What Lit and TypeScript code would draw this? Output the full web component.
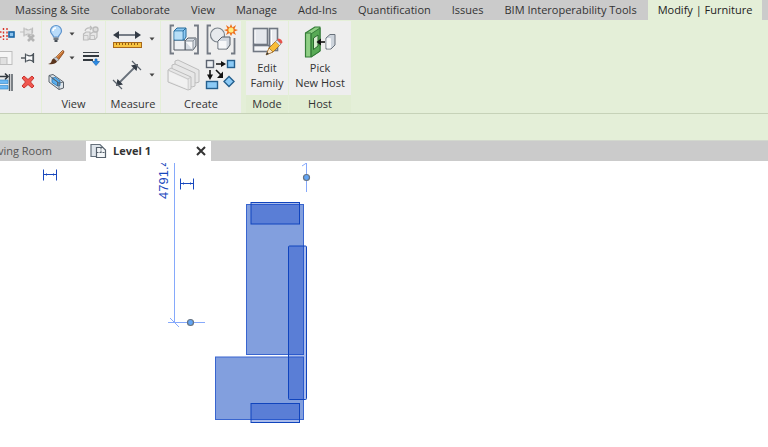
import { LitElement, html, svg, css, nothing, type SVGTemplateResult, type TemplateResult } from "lit";
import { customElement, property } from "lit/decorators.js";

interface Glyph {
  w: number;
  h: number;
  art: SVGTemplateResult;
}

const icons: Record<string, Glyph> = {
  splitGap: {
    w: 20, h: 20,
    art: svg`<path d="M9.500 4V16M13 4V16" stroke="#d8352c" stroke-width="1.400" stroke-dasharray="2 1.500"/>
      <path d="M2 8H8M2 13H8" fill="none" stroke="#d8352c" stroke-width="1.400" stroke-dasharray="2 1.500"/>
      <rect x="15" y="8" width="5" height="5" fill="#8cc4ef" stroke="#1764a4" stroke-width="1.600"/>`,
  },
  unpin: {
    w: 18, h: 18,
    art: svg`<path d="M1 7H5M5 2.500V11.500M5 4H7Q9 6 12 4H13V10H12Q9 8 7 10H5M13.500 2.500V8" fill="#e3e3e3" stroke="#bdbdbd" stroke-width="1.200"/>
      <path d="M9 10l6 6M15 10l-6 6" stroke="#b4b4b4" stroke-width="2.600"/>`,
  },
  scale: {
    w: 20, h: 20,
    art: svg`<rect x="1" y="3.500" width="17" height="13" fill="#f5f5f5" stroke="#bdbdbd"/>
      <rect x="6" y="9.500" width="7" height="7" fill="#e0e0e0" stroke="#bdbdbd"/>`,
  },
  pin: {
    w: 18, h: 18,
    art: svg`<path d="M2 9H6" stroke="#3e454b" stroke-width="1.300"/>
      <path d="M6.500 4.500V13.500M6.500 6H8Q11 8 14 5.500V12.500Q11 10 8 12H6.500Z" fill="#f9fafb" stroke="#4d555c" stroke-width="1.200"/>
      <path d="M14.500 4V14" stroke="#4d555c" stroke-width="1.200"/>`,
  },
  array: {
    w: 20, h: 20,
    art: svg`<path d="M3 4.500H14M11 1.500L14 4.500L11 7.500" fill="none" stroke="#333a41" stroke-width="1.600"/>
      <path d="M5 8H14V11.500H5ZM5 13.500H14V17H5Z" fill="#6db8f3" stroke="#2b83c8" stroke-width=".6"/>
      <path d="M15.500 2V19M18 2V19" stroke="#4b535a" stroke-width="1.400"/>`,
  },
  remove: {
    w: 18, h: 18,
    art: svg`<path d="M3 5L5 3L9 6.500L13 3L15 5L11.500 9L15 13L13 15L9 11.500L5 15L3 13L6.500 9Z" fill="#f0574f" stroke="#c9342f" stroke-linejoin="round"/>`,
  },
  bulb: {
    w: 18, h: 18,
    art: svg`<path d="M6.500 12C6.500 9.500 3.500 9 3.500 6A5.500 5.500 0 0 1 14.500 6C14.500 9 11.500 9.500 11.500 12Z" fill="#b9dcfa" stroke="#5c92cc" stroke-width="1.200"/>
      <path d="M6 6A3 3 0 0 1 9 3" fill="none" stroke="#fff" stroke-width="1.600"/>
      <path d="M6.500 12.500H11.500V15H6.500Z" fill="#6f7880"/><path d="M7.500 15H10.500V17H7.500Z" fill="#454d55"/>`,
  },
  displace: {
    w: 18, h: 18,
    art: svg`<path d="M1.500 9L4 7H8V13L6 15H1.500ZM8 9L11 7H15V12L13 14.500H8Z" fill="#e6e6e6" stroke="#bcbcbc" stroke-width="1.200"/>
      <path d="M3 6Q4 2 9 3M8 1L10 3L8 5" fill="none" stroke="#bcbcbc" stroke-width="1.200"/>
      <circle cx="13.500" cy="4.500" r="2.500" fill="#ddd" stroke="#bcbcbc" stroke-width="1.400"/>
      <path d="M1.500 10.500H6V15M8 10.500H12.500V14" fill="none" stroke="#c4c4c4"/>`,
  },
  brush: {
    w: 18, h: 18,
    art: svg`<path d="M8 9L15.500 1.500Q18 2 16.500 4L11 11.500Z" fill="#c4702f" stroke="#83421a" stroke-width=".8"/>
      <path d="M8.500 9L16 2" stroke="#edb57a" stroke-width=".8"/>
      <path d="M6.500 9.500L9 8L11.500 10.500L10 12.500Z" fill="#c9ced3" stroke="#737b82" stroke-width=".6"/>
      <path d="M7 9.500L10 12.500Q8 16 1 15Q4.500 14 4.500 12Q5 9.500 7 9.500Z" fill="#5b351d"/>`,
  },
  thinLines: {
    w: 18, h: 18,
    art: svg`<path d="M1 3.500H17" stroke="#3c4349"/><path d="M1 7H17" stroke="#33393f" stroke-width="2"/>
      <path d="M1 11H11" stroke="#33393f" stroke-width="2"/>
      <path d="M13 10H15V12.500H17.500L14 16.500L10.500 12.500H13Z" fill="#2c8ce6" stroke="#1766b1" stroke-width=".7"/>`,
  },
  selectionBox: {
    w: 18, h: 18,
    art: svg`<path d="M2 2.500L6 1.500L16.500 9V15L12 16.500L2 9Z" fill="#dfe5ea" stroke="#59626b"/>
      <path d="M5 5L8.500 4.500L13 8V12.500L10.500 13L5 9.500Z" fill="#58aeee" stroke="#1f6fae" stroke-width=".8"/>
      <path d="M2 2.500L12 10V16.500M12 10L16.500 9M5 5L10.500 9V13" fill="none" stroke="#59626b" stroke-width=".9"/>`,
  },
  measure: {
    w: 32, h: 32,
    art: svg`<path d="M5 12H27" stroke="#68707a" stroke-width="1.800"/><path d="M2 12L8 8V16ZM30 12L24 8V16Z" fill="#333b45"/>
      <rect x="2.500" y="19.500" width="28" height="5" fill="#f7c340" stroke="#a8681a"/>
      <path d="M5.500 20V22M8.500 20V22M11.500 20V22M14.500 20V22M17.500 20V22M20.500 20V22M23.500 20V22M26.500 20V22" stroke="#84500f" stroke-width=".9"/>`,
  },
  aligned: {
    w: 32, h: 32,
    art: svg`<path d="M7 25L25 7" stroke="#68707a" stroke-width="1.800"/>
      <path d="M5 27L6.500 20L12 25.500ZM27 5L20 6.500L25.500 12Z" fill="#333b45"/>
      <path d="M2 21L11 30M21 2L30 11" stroke="#5c646d" stroke-width="1.200"/>`,
  },
  createAssembly: {
    w: 32, h: 32,
    art: svg`<path d="M6 2.500H2.500V30.500H6M26 2.500H30V30.500H26" fill="none" stroke="#747a84" stroke-width="1.800"/>
      <path d="M17 18L20 15H28V23L25 27H17Z" fill="#d6dce3" stroke="#515962"/><path d="M17 18H25V27M25 18L28 15" fill="#f7f8fa" stroke="#8b939c"/>
      <path d="M6 17H17V27H6Z" fill="#eef0f3" stroke="#515962"/>
      <path d="M6 8L9 5H18V14L16 17H6Z" fill="#8cc9f3" stroke="#286c9c"/><path d="M6 8H15V17M15 8L18 5" fill="none" stroke="#286c9c"/><rect x="6.500" y="8.500" width="8" height="8" fill="#b7dff8"/>`,
  },
  createGroup: {
    w: 32, h: 32,
    art: svg`<path d="M6 2.500H2.500V30.500H6M26 30.500H29.500V15" fill="none" stroke="#747a84" stroke-width="1.800"/>
      <circle cx="12.500" cy="12" r="7" fill="#e7eaed" stroke="#7b838b" stroke-width="1.200"/>
      <path d="M13 18L17 14H25V22L22 26H13Z" fill="#d1d7df" stroke="#555d66"/><rect x="13.500" y="18" width="8" height="7.500" fill="#f6f7f9"/>
      <path d="M26 1L27.500 4.500L31 2L29.500 6L33 7L29.500 8.500L31 12L27.500 10L26 13L24.500 10L21 12L22.500 8.500L19 7L22.500 6L21 2L24.500 4.500Z" fill="#ed701c"/><circle cx="26" cy="7" r="2.600" fill="#ffec81"/>`,
  },
  createParts: {
    w: 34, h: 32,
    art: svg`<g fill="#e7e7e7" stroke="#bdbdbd" stroke-linejoin="round"><path d="M8 2L11 1L32 11V23L29 24L8 14Z"/>
      <path d="M5 6L8 5L28 14V27L25 28L5 18Z"/><path d="M1 11L4 9L24 18V30L21 31L1 23Z"/></g>
      <path d="M1 11L21 20V31M21 20L24 18" fill="none" stroke="#c6c6c6"/><path d="M2 12.500L20.500 21V30L2 22Z" fill="#f1f1f1"/>`,
  },
  createSimilar: {
    w: 32, h: 32,
    art: svg`<rect x="1.500" y="1.500" width="7" height="7" fill="#eef0f3" stroke="#5b6370" stroke-width="1.400"/>
      <rect x="22.500" y="1.500" width="7" height="7" fill="#8bcaf6" stroke="#245f8e" stroke-width="1.400"/>
      <rect x="1.500" y="22.500" width="11" height="7" fill="#8bcaf6" stroke="#245f8e" stroke-width="1.400"/>
      <path d="M24 17.500L29 22.500L24 27.500L19 22.500Z" fill="#8bcaf6" stroke="#245f8e" stroke-width="1.400"/>
      <path d="M11 5H17M5 11V17M11 11L16 16" stroke="#111" stroke-width="1.600"/><path d="M16 2L21 5L16 8ZM2 15.500H8L5 21ZM18 12.500V19H12Z" fill="#111"/>`,
  },
  editFamily: {
    w: 32, h: 32,
    art: svg`<rect x="2.500" y="2.500" width="14" height="16" fill="#e4e7ec" stroke="#707782" stroke-width="1.600"/>
      <rect x="18.500" y="2.500" width="8" height="22" fill="#e9ebef" stroke="#707782" stroke-width="1.600"/>
      <rect x="2.500" y="19.500" width="16" height="6" fill="#f4f5f7" stroke="#707782" stroke-width="1.600"/>
      <path d="M4 4V17M20.500 4V20" stroke="#fff"/>
      <path d="M16 28L18 22L26 14L30 18L22 26Z" fill="#f8bd39" stroke="#9b661d" stroke-width=".8"/>
      <path d="M26 14L27.500 12.500Q31 13 31.500 16.500L30 18Z" fill="#e6534b"/><path d="M24.500 15.500L26 14L30 18L28.500 19.500Z" fill="#dfe3e8" stroke="#7d858d" stroke-width=".5"/>
      <path d="M15 29L18 22L22 26Z" fill="#f9e5c8" stroke="#9b661d" stroke-width=".7"/><path d="M15 29L16 26L18 28Z" fill="#333"/>`,
  },
  pickHost: {
    w: 32, h: 32,
    art: svg`<path d="M1.500 7L11 1H16V25L7 31H1.500Z" fill="#8fcf85" stroke="#347d38" stroke-width="1.200" stroke-linejoin="round"/>
      <path d="M7 8L16 2V25L7 31Z" fill="#58aa55" stroke="#347d38"/><path d="M1.500 7H7V31" fill="none" stroke="#347d38"/>
      <path d="M9.500 12L14 9V20L9.500 23.500Z" fill="#d7edcf" stroke="#28682c"/>
      <path d="M16 16H21" stroke="#111" stroke-width="1.600"/><path d="M12.500 16L17 12.500V19.500Z" fill="#111"/>
      <path d="M22 12L26 8.500H31V19L27 23H22Z" fill="#cdd4dc" stroke="#68717b"/><rect x="22.500" y="12" width="4.500" height="10.500" rx="1" fill="#f4f5f7"/>`,
  },
  floorPlan: {
    w: 18, h: 16,
    art: svg`<path d="M1 1.500H10L12.500 4V13.500H1Z" fill="#dfe5eb" stroke="#66717c" stroke-width="1.200"/>
      <path d="M6.500 4.500H13L15.500 7V14.500H6.500Z" fill="#f3f6f8" stroke="#56616c" stroke-width="1.200"/>
      <path d="M6.500 9.500H15M11 4.500V9.500" stroke="#56616c" stroke-dasharray="2 1"/>`,
  },
  close: { w: 10, h: 10, art: svg`<path d="M1 1L9 9M9 1L1 9" stroke="#333" stroke-width="2"/>` },
  caret: { w: 6, h: 4, art: svg`<path d="M.5 .5H5.500L3 3.500Z" fill="#444"/>` },
};

const draw = (name: string) => {
  const g = icons[name];
  return html`<svg width=${g.w} height=${g.h} viewBox="0 0 ${g.w} ${g.h}" fill="none" aria-hidden="true">${g.art}</svg>`;
};

const tool = (name: string, label: string) =>
  html`<button class="tool" type="button" aria-label=${label}>${draw(name)}</button>`;

const menu = (label: string) =>
  html`<button class="tool" type="button" aria-label=${label}>${draw("caret")}</button>`;

@customElement("ribbon-panel")
export class RibbonPanel extends LitElement {
  @property() label = "";

  static styles = css`
    :host { display: flex; flex-direction: column; flex: none; }
    .body { flex: 1; background: #eeeeee; }
    .label {
      height: 18px;
      line-height: 18px;
      text-align: center;
      background: var(--label-bg, #eeeeee);
    }
  `;

  render() {
    return html`<div class="body"><slot></slot></div><div class="label">${this.label}</div>`;
  }
}

@customElement("ribbon-bar")
export class RibbonBar extends LitElement {
  static styles = css`
    :host { display: block; background: #e4efd8; padding-top: 1px; }
    .panels {
      display: flex;
      gap: 1px;
      height: 92px;
      margin-left: -8px;
      border-bottom: 1px solid #c6d2b8;
    }
    .shelf { height: 26px; }
    .grid { display: grid; place-items: stretch; height: 74px; }
    .modify { grid-template-columns: 24px 24px; grid-auto-rows: 24px; width: 49px; padding-top: 1px; height: 73px; }
    .view { grid-template-columns: 20px 12px 26px; grid-auto-rows: 24px; padding: 1px 1px 0 4px; height: 73px; }
    .measure { grid-template-columns: 42px 8px; grid-auto-rows: 36px; padding-right: 4px; }
    .create { grid-template-columns: 37px 37px; grid-auto-rows: 36px; padding: 0 2px 0 4px; }
    .context { --label-bg: #e1edd3; }
    .first { margin-left: 4px; }
    .tool, .big {
      display: flex;
      align-items: center;
      justify-content: center;
      padding: 0;
      border: 0;
      background: none;
      font: inherit;
      color: inherit;
    }
    .big { flex-direction: column; height: 74px; line-height: 15px; }
    .line { display: block; }
    .big svg { margin-bottom: 2px; }
    .mode { width: 42px; }
    .host { width: 62px; }
    svg { flex: none; overflow: visible; }
  `;

  render() {
    return html`
      <div class="panels">
        <ribbon-panel>
          <div class="grid modify">
            ${tool("splitGap", "Split with gap")}${tool("unpin", "Unpin")}
            ${tool("scale", "Scale")}${tool("pin", "Pin")}
            ${tool("array", "Array")}${tool("remove", "Delete")}
          </div>
        </ribbon-panel>
        <ribbon-panel label="View">
          <div class="grid view">
            ${tool("bulb", "Hide in view")}${menu("Hide options")}${tool("displace", "Displace elements")}
            ${tool("brush", "Override graphics")}${menu("Override options")}${tool("thinLines", "Linework")}
            ${tool("selectionBox", "Selection box")}
          </div>
        </ribbon-panel>
        <ribbon-panel label="Measure">
          <div class="grid measure">
            ${tool("measure", "Measure")}${menu("Measure options")}
            ${tool("aligned", "Aligned dimension")}${menu("Dimension options")}
          </div>
        </ribbon-panel>
        <ribbon-panel label="Create">
          <div class="grid create">
            ${tool("createAssembly", "Create assembly")}${tool("createGroup", "Create group")}
            ${tool("createParts", "Create parts")}${tool("createSimilar", "Create similar")}
          </div>
        </ribbon-panel>
        <ribbon-panel class="context first" label="Mode">
          <button class="big mode" type="button">
            ${draw("editFamily")}<span class="line">Edit</span><span class="line">Family</span>
          </button>
        </ribbon-panel>
        <ribbon-panel class="context" label="Host">
          <button class="big host" type="button">
            ${draw("pickHost")}<span class="line">Pick</span><span class="line">New Host</span>
          </button>
        </ribbon-panel>
      </div>
      <div class="shelf"></div>
    `;
  }
}

@customElement("plan-view")
export class PlanView extends LitElement {
  static styles = css`
    :host { display: block; background: #fff; padding-top: 2px; }
    svg { display: block; width: 100%; height: 100%; }
    .value { font: 13px "Liberation Sans", Arial, sans-serif; fill: #1848bd; }
    .base { fill: #829fde; stroke: #3865cf; }
    .over { fill: #1446c8; fill-opacity: 0.36; stroke: #1044bd; }
    .guide { stroke: #86a9fb; }
    .tick { stroke: #1848bd; }
    .grip { fill: #62a5f5; stroke: #667382; stroke-width: 1.2px; }
  `;

  private marker(x: number, y: number) {
    return svg`<path class="tick" d="M${x} ${y - 1}v11M${x + 13} ${y - 1}v11M${x} ${y + 4}h13M${x + 3} ${y + 3}v2M${x + 10} ${y + 3}v2"/>`;
  }

  render() {
    return html`<svg fill="none" role="img" aria-label="Level 1 floor plan">
      <rect class="base" x="246.500" y="41.500" width="57" height="150" />
      <rect class="base" x="215.500" y="194" width="88" height="62.500" />
      <rect class="over" x="251" y="39.500" width="48.500" height="21.500" />
      <rect class="over" x="288.500" y="83" width="18" height="153.500" rx="1" />
      <rect class="over" x="251" y="240.500" width="48.500" height="19" />
      <path class="guide" d="M174.500 0V159M168 159.500H205M170 155L179 164M306.500 0V29M302 3L306.500 0" />
      <circle class="grip" cx="190.500" cy="159.500" r="3" />
      <circle class="grip" cx="306.500" cy="14.500" r="3" />
      <text class="value" transform="translate(168 36) rotate(-90)">4791.4</text>
      ${this.marker(43.5, 7.5)} ${this.marker(180.5, 16.5)}
    </svg>`;
  }
}

@customElement("app-root")
export class AppRoot extends LitElement {
  private tabs = [
    "Massing & Site", "Collaborate", "View", "Manage", "Add-Ins",
    "Quantification", "Issues", "BIM Interoperability Tools", "Modify | Furniture",
  ];

  static styles = css`
    :host {
      display: flex;
      flex-direction: column;
      height: 100vh;
      overflow: hidden;
      background: #fff;
      color: #333;
      font: 11px/16px "Open Sans", "Noto Sans", sans-serif;
    }
    .tabs {
      display: flex;
      flex: none;
      gap: 1px;
      height: 20px;
      padding-left: 5px;
      background: #cbcbcb;
    }
    .tab {
      flex: none;
      padding: 0 10px;
      border: 0;
      background: none;
      color: inherit;
      font: inherit;
      white-space: nowrap;
    }
    .active { background: #e4efd8; color: #222; }
    ribbon-bar { flex: none; }
    .docs {
      display: flex;
      flex: none;
      height: 20px;
      margin-left: -40px;
      border-top: 1px solid #d3d8ce;
      background: #cbcbcb;
    }
    .doc {
      display: flex;
      align-items: center;
      justify-content: flex-end;
      box-sizing: border-box;
      width: 126px;
      padding: 0 34px 0 0;
      border: 0;
      background: none;
      color: #555;
      font: inherit;
      white-space: nowrap;
    }
    .current {
      display: flex;
      align-items: center;
      box-sizing: border-box;
      width: 125px;
      padding: 0 5px 0 4px;
      background: #fff;
    }
    .title {
      display: flex;
      flex: 1;
      align-items: center;
      gap: 5px;
      padding: 0;
      border: 0;
      background: none;
      color: #333;
      font: inherit;
      font-weight: 700;
    }
    .close { display: flex; padding: 0; border: 0; background: none; }
    plan-view { flex: 1; min-height: 0; }
  `;

  render(): TemplateResult {
    const last = this.tabs.length - 1;
    return html`
      <nav class="tabs">
        ${this.tabs.map((t, i) => html`<button type="button" class="tab ${i === last ? "active" : ""}" aria-current=${i === last ? "page" : nothing}>${t}</button>`)}
      </nav>
      <ribbon-bar></ribbon-bar>
      <nav class="docs">
        <button type="button" class="doc">Living Room</button>
        <div class="current">
          <button type="button" class="title">${draw("floorPlan")}<span>Level 1</span></button>
          <button type="button" class="close" aria-label="Close Level 1">${draw("close")}</button>
        </div>
      </nav>
      <plan-view></plan-view>
    `;
  }
}
